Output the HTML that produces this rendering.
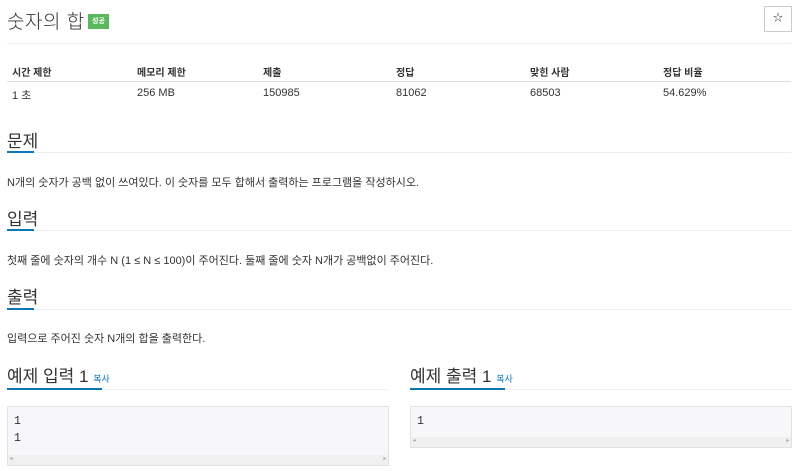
<!DOCTYPE html><html><head><meta charset="utf-8"><style>
body{margin:0;width:800px;height:471px;overflow:hidden;background:#fff;font-family:"Liberation Sans","Noto Sans CJK KR",sans-serif;color:#333;position:relative}
.a{position:absolute;white-space:nowrap}
.hr{position:absolute;height:1px;background:#eee}
.h{font-size:17px;color:#333}
.ul{position:absolute;height:2px;background:#0e76b6}
.t{font-size:11px}
.b{font-size:10px;font-weight:bold}
.box{position:absolute;background:#f7f7f9;border:1px solid #e1e1e8;}
.box pre{margin:0;font-family:"Liberation Mono",monospace;font-size:11.5px;line-height:17px;padding:6px 6px;color:#333}
.sb{position:absolute;left:0;right:0;bottom:0;height:10px;background:#f0f0f0;font-size:6px;color:#aaa}
</style></head><body>
<div class="a" style="left:7px;top:7px;font-size:19px;font-weight:300;color:#333;letter-spacing:0.5px">숫자의 합</div>
<div class="a" style="left:88px;top:14px;background:#5cb85c;color:#fff;font-size:7px;font-weight:bold;padding:2px 4px;line-height:11px">성공</div>
<div class="a" style="left:764px;top:6px;width:26px;height:24px;border:1px solid #ccc;font-size:10px;text-align:center;line-height:24px">☆</div>
<div class="hr" style="left:7px;width:784px;top:43px"></div>
<div class="a b" style="left:12px;top:64px">시간 제한</div>
<div class="a b" style="left:137px;top:64px">메모리 제한</div>
<div class="a b" style="left:263px;top:64px">제출</div>
<div class="a b" style="left:396px;top:64px">정답</div>
<div class="a b" style="left:530px;top:64px">맞힌 사람</div>
<div class="a b" style="left:663px;top:64px">정답 비율</div>
<div class="hr" style="left:7px;width:784px;top:81px;background:#ddd"></div>
<div class="a t" style="left:12px;top:87px">1 초</div>
<div class="a t" style="left:137px;top:87px">256 MB</div>
<div class="a t" style="left:263px;top:87px">150985</div>
<div class="a t" style="left:396px;top:87px">81062</div>
<div class="a t" style="left:530px;top:87px">68503</div>
<div class="a t" style="left:663px;top:87px">54.629%</div>

<div class="a h" style="left:7px;top:127px">문제</div>
<div class="hr" style="left:7px;width:784px;top:152px"></div><div class="ul" style="left:7px;width:27px;top:151px"></div>
<div class="a t" style="left:7px;top:174px">N개의 숫자가 공백 없이 쓰여있다. 이 숫자를 모두 합해서 출력하는 프로그램을 작성하시오.</div>

<div class="a h" style="left:7px;top:205px">입력</div>
<div class="hr" style="left:7px;width:784px;top:230px"></div><div class="ul" style="left:7px;width:27px;top:229px"></div>
<div class="a t" style="left:7px;top:252px">첫째 줄에 숫자의 개수 N (1 ≤ N ≤ 100)이 주어진다. 둘째 줄에 숫자 N개가 공백없이 주어진다.</div>

<div class="a h" style="left:7px;top:283px">출력</div>
<div class="hr" style="left:7px;width:784px;top:309px"></div><div class="ul" style="left:7px;width:27px;top:308px"></div>
<div class="a t" style="left:7px;top:330px">입력으로 주어진 숫자 N개의 합을 출력한다.</div>

<div class="a h" style="left:7px;top:362px">예제 입력 1 <span style="font-size:9px;color:#0e76b6">복사</span></div>
<div class="hr" style="left:7px;width:381px;top:389px"></div><div class="ul" style="left:7px;width:95px;top:388px"></div>
<div class="box" style="left:7px;top:406px;width:380px;height:58px"><pre>1
1</pre><div class="sb">&nbsp;◂<span style="float:right">▸&nbsp;</span></div></div>

<div class="a h" style="left:410px;top:362px">예제 출력 1 <span style="font-size:9px;color:#0e76b6">복사</span></div>
<div class="hr" style="left:410px;width:381px;top:389px"></div><div class="ul" style="left:410px;width:95px;top:388px"></div>
<div class="box" style="left:410px;top:406px;width:380px;height:40px"><pre>1</pre><div class="sb">&nbsp;◂<span style="float:right">▸&nbsp;</span></div></div>
</body></html>
